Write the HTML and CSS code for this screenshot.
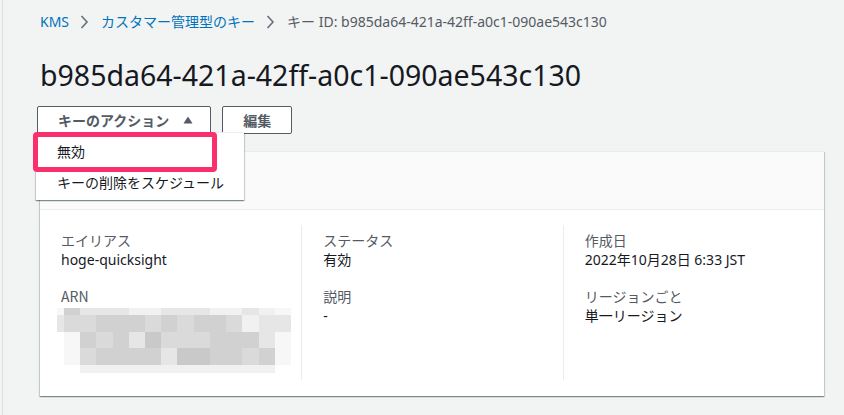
FILE: index.html
```html
<!DOCTYPE html>
<html lang="ja">
<head>
<meta charset="utf-8">
<title>KMS</title>
<link rel="stylesheet" href="styles.css">
</head>
<body>
<div class="frame">
  <main class="page">
    <nav class="crumbs">
      <a class="crumb-link">KMS</a>
      <svg class="chev" width="10" height="14" viewBox="0 0 10 14"><path d="M2.5 1 L8 7 L2.5 13" fill="none" stroke="#687078" stroke-width="1.6"/></svg>
      <a class="crumb-link">カスタマー管理型のキー</a>
      <svg class="chev" width="10" height="14" viewBox="0 0 10 14"><path d="M2.5 1 L8 7 L2.5 13" fill="none" stroke="#687078" stroke-width="1.6"/></svg>
      <span class="crumb-current">キー ID: b985da64-421a-42ff-a0c1-090ae543c130</span>
    </nav>
    <h1 class="title">b985da64-421a-42ff-a0c1-090ae543c130</h1>
    <div class="actions">
      <div class="dropdown">
        <button class="btn">キーのアクション
          <svg class="tri" width="10" height="8" viewBox="0 0 10 8"><polygon points="5,0.5 9.5,7.5 0.5,7.5" fill="#545b64"/></svg>
        </button>
        <ul class="menu">
          <li class="menu-item">無効</li>
          <li class="menu-item">キーの削除をスケジュール</li>
        </ul>
        <div class="highlight"></div>
      </div>
      <button class="btn btn-edit">編集</button>
    </div>
    <section class="card">
      <header class="card-head"></header>
      <div class="card-body">
        <div class="col">
          <div class="field">
            <div class="label">エイリアス</div>
            <div class="value">hoge-quicksight</div>
          </div>
          <div class="field">
            <div class="label">ARN</div>
            <div class="mosaic">
              <i class="f"></i><i class="d"></i><i class="b"></i><i class="b"></i><i class="b"></i><i class="a"></i><i class="a"></i><i class="b"></i><i class="b"></i><i class="b"></i><i class="a"></i><i class="a"></i><i class="b"></i><i class="a"></i><i class="f"></i>
              <i class="b"></i><i class="c"></i><i class="c"></i><i class="d"></i><i class="d"></i><i class="d"></i><i class="c"></i><i class="d"></i><i class="c"></i><i class="d"></i><i class="d"></i><i class="c"></i><i class="a"></i><i class="b"></i><i class="b"></i>
              <i class="w"></i><i class="f"></i><i class="d"></i><i class="c"></i><i class="d"></i><i class="b"></i><i class="e"></i><i class="c"></i><i class="c"></i><i class="c"></i><i class="d"></i><i class="d"></i><i class="d"></i><i class="b"></i><i class="f"></i>
              <i class="w"></i><i class="f"></i><i class="c"></i><i class="d"></i><i class="d"></i><i class="d"></i><i class="d"></i><i class="b"></i><i class="e"></i><i class="e"></i><i class="d"></i><i class="d"></i><i class="c"></i><i class="d"></i><i class="f"></i>
              <i class="w"></i><i class="w"></i><i class="a"></i><i class="a"></i><i class="a"></i><i class="a"></i><i class="a"></i><i class="a"></i><i class="a"></i><i class="a"></i><i class="a"></i><i class="a"></i><i class="a"></i><i class="a"></i><i class="w"></i>
            </div>
          </div>
        </div>
        <div class="col col-div">
          <div class="field">
            <div class="label">ステータス</div>
            <div class="value">有効</div>
          </div>
          <div class="field">
            <div class="label">説明</div>
            <div class="value">-</div>
          </div>
        </div>
        <div class="col col-div">
          <div class="field">
            <div class="label">作成日</div>
            <div class="value">2022年10月28日 6:33 JST</div>
          </div>
          <div class="field">
            <div class="label">リージョンごと</div>
            <div class="value">単一リージョン</div>
          </div>
        </div>
      </div>
    </section>
  </main>
</div>
</body>
</html>
```
FILE: styles.css
```css
* { box-sizing: border-box; }
html, body { margin: 0; padding: 0; }
body {
  background: #f2f3f3;
  font-family: "Noto Sans", "Noto Sans CJK JP", sans-serif;
  font-size: 14px;
  color: #16191f;
  width: 844px;
  height: 415px;
  overflow: hidden;
}
.frame {
  padding-left: 2px;
  height: 415px;
}
.page {
  border-left: 1px solid #dcdfe0;
  height: 415px;
  padding: 12px 19px 0 37px;
}
.crumbs {
  display: flex;
  align-items: center;
  height: 20px;
  line-height: 20px;
}
.crumb-link { color: #0073bb; }
.crumb-current { color: #545b64; }
.chev { margin: 0 12px 0 10px; }
.title {
  margin: 25px 0 0;
  font-size: 28.5px;
  line-height: 36px;
  font-weight: 400;
  color: #16191f;
}
.actions {
  display: flex;
  gap: 11px;
  margin: 13px 0 0 -3px;
}
.dropdown { position: relative; }
.btn {
  height: 28px;
  border: 1px solid #545b64;
  border-radius: 2px;
  background: #fff;
  color: #545b64;
  font-family: "Noto Sans CJK JP", "Noto Sans", sans-serif;
  font-weight: 700;
  font-size: 14px;
  padding: 0 17px 0 20px;
  display: flex;
  align-items: center;
}
.tri { margin-left: 14px; margin-top: -1px; }
.btn-edit { padding: 0 20px; }
.menu {
  position: absolute;
  top: 26px;
  left: -1px;
  width: 208px;
  margin: 0;
  padding: 3px 0 2px;
  list-style: none;
  background: #fff;
  border-top: 1px solid #eaeded;
  box-shadow: 0 1px 1px 0 rgba(0,28,36,.3), 1px 1px 1px 0 rgba(0,28,36,.15), -1px 1px 1px 0 rgba(0,28,36,.15);
  z-index: 5;
  font-family: "Noto Sans CJK JP", sans-serif;
}
.menu-item {
  height: 31px;
  line-height: 31px;
  padding-left: 21px;
  color: #16191f;
}
.highlight {
  position: absolute;
  top: 26px;
  left: -4px;
  width: 184px;
  height: 40px;
  border: 5px solid #fa2f6c;
  border-radius: 4px;
  z-index: 6;
}
.card {
  margin-top: 17px;
  width: 784px;
  background: #fff;
  box-shadow: 0 1px 1px 0 rgba(0,28,36,.3), 1px 1px 1px 0 rgba(0,28,36,.15), -1px 1px 1px 0 rgba(0,28,36,.15);
  border-top: 1px solid #eaeded;
}
.card-head {
  height: 58px;
  background: #fafafa;
  border-bottom: 1px solid #eaeded;
}
.card-body {
  display: grid;
  grid-template-columns: repeat(3, minmax(0, 1fr));
  padding: 15px 0 16px;
}
.col {
  padding: 5px 21px 0;
  height: 155px;
  min-width: 0;
  display: flex;
  flex-direction: column;
  gap: 16px;
}
.col-div { border-left: 1px solid #eaeded; }
.field { line-height: 20px; }
.label { color: #545b64; font-family: "Noto Sans CJK JP", "Noto Sans", sans-serif; }
.value { color: #16191f; }
.mosaic {
  display: grid;
  grid-template-columns: 7px repeat(14, 1fr);
  grid-template-rows: 7px 17px 16px 17px 8px;
  width: 234px;
  margin: 2px 0 0 -4px;
}
.mosaic i { display: block; }
.mosaic .w { background: #ffffff; }
.mosaic .f { background: #f7f7f7; }
.mosaic .a { background: #f1f1f1; }
.mosaic .b { background: #e6e6e6; }
.mosaic .c { background: #dadada; }
.mosaic .d { background: #d1d1d1; }
.mosaic .e { background: #c9c9c9; }
```
